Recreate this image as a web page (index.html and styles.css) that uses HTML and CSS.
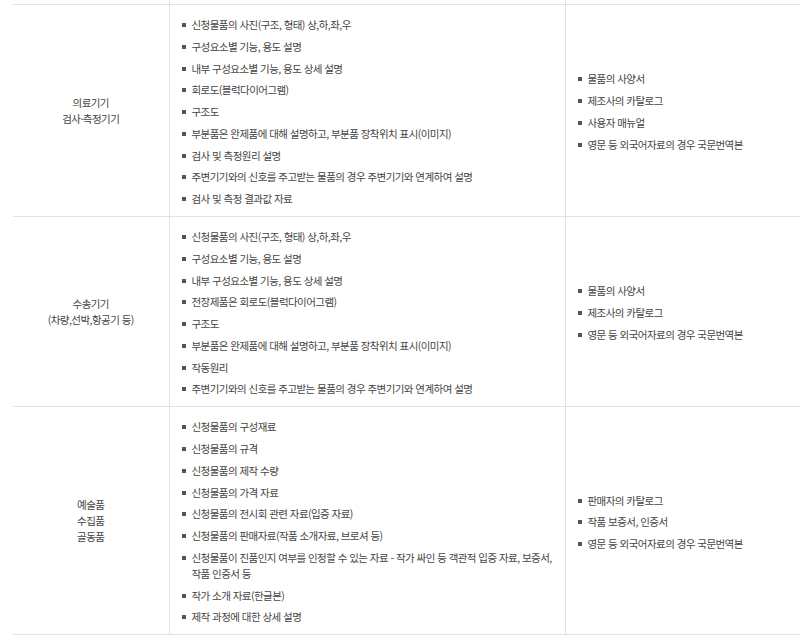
FILE: index.html
```html
<!DOCTYPE html>
<html lang="ko">
<head>
<meta charset="utf-8">
<link rel="stylesheet" href="styles.css">
</head>
<body>
<div class="wrap">
<table class="tbl">
  <colgroup>
    <col class="c1"><col class="c2"><col class="c3">
  </colgroup>
  <tbody>
    <tr class="tail"><td></td><td></td><td></td></tr>
    <tr>
      <th>의료기기<br>검사·측정기기</th>
      <td>
        <ul class="list">
          <li>신청물품의 사진(구조, 형태) 상,하,좌,우</li>
          <li>구성요소별 기능, 용도 설명</li>
          <li>내부 구성요소별 기능, 용도 상세 설명</li>
          <li>회로도(블럭다이어그램)</li>
          <li>구조도</li>
          <li>부분품은 완제품에 대해 설명하고, 부분품 장착위치 표시(이미지)</li>
          <li>검사 및 측정원리 설명</li>
          <li>주변기기와의 신호를 주고받는 물품의 경우 주변기기와 연계하여 설명</li>
          <li>검사 및 측정 결과값 자료</li>
        </ul>
      </td>
      <td>
        <ul class="list">
          <li>물품의 사양서</li>
          <li>제조사의 카탈로그</li>
          <li>사용자 매뉴얼</li>
          <li>영문 등 외국어자료의 경우 국문번역본</li>
        </ul>
      </td>
    </tr>
    <tr>
      <th>수송기기<br>(차량,선박,항공기 등)</th>
      <td>
        <ul class="list">
          <li>신청물품의 사진(구조, 형태) 상,하,좌,우</li>
          <li>구성요소별 기능, 용도 설명</li>
          <li>내부 구성요소별 기능, 용도 상세 설명</li>
          <li>전장제품은 회로도(블럭다이어그램)</li>
          <li>구조도</li>
          <li>부분품은 완제품에 대해 설명하고, 부분품 장착위치 표시(이미지)</li>
          <li>작동원리</li>
          <li>주변기기와의 신호를 주고받는 물품의 경우 주변기기와 연계하여 설명</li>
        </ul>
      </td>
      <td>
        <ul class="list">
          <li>물품의 사양서</li>
          <li>제조사의 카탈로그</li>
          <li>영문 등 외국어자료의 경우 국문번역본</li>
        </ul>
      </td>
    </tr>
    <tr>
      <th>예술품<br>수집품<br>골동품</th>
      <td>
        <ul class="list">
          <li>신청물품의 구성재료</li>
          <li>신청물품의 규격</li>
          <li>신청물품의 제작 수량</li>
          <li>신청물품의 가격 자료</li>
          <li>신청물품의 전시회 관련 자료(입증 자료)</li>
          <li>신청물품의 판매자료(작품 소개자료, 브로셔 등)</li>
          <li>신청물품이 진품인지 여부를 인정할 수 있는 자료 - 작가 싸인 등 객관적 입증 자료, 보증서, 작품 인증서 등</li>
          <li>작가 소개 자료(한글본)</li>
          <li>제작 과정에 대한 상세 설명</li>
        </ul>
      </td>
      <td>
        <ul class="list">
          <li>판매자의 카탈로그</li>
          <li>작품 보증서, 인증서</li>
          <li>영문 등 외국어자료의 경우 국문번역본</li>
        </ul>
      </td>
    </tr>
  </tbody>
</table>
</div>
</body>
</html>
```
FILE: styles.css
```css
html, body {
  margin: 0;
  padding: 0;
  background: #fff;
}
body {
  font-family: "Noto Sans CJK KR", "Noto Sans", sans-serif;
  font-size: 10.5px;
  letter-spacing: -0.55px;
  color: #444;
}
.wrap {
  padding-left: 13px;
  overflow: hidden;
}
.tbl {
  width: 787px;
  border-collapse: collapse;
  table-layout: fixed;
}
.c1 { width: 156px; }
.c2 { width: 396px; }
.c3 { width: 235px; }
.tbl th,
.tbl td {
  border-bottom: 1px solid #e2e2e2;
  border-left: 1px solid #e2e2e2;
  vertical-align: middle;
  padding: 0;
}
.tbl th:first-child,
.tbl td:first-child {
  border-left: 0;
}
.tbl th {
  font-weight: normal;
  text-align: center;
  line-height: 16px;
}
.tbl td {
  padding: 12px 10px 9px 12px;
}
.tbl .tail td { padding: 0; height: 4px; }
.list {
  list-style: none;
  margin: 0;
  padding: 0;
}
.list li {
  position: relative;
  padding-left: 10px;
  line-height: 16px;
}
.list li + li {
  margin-top: 5.75px;
}
.list li::before {
  content: "";
  position: absolute;
  left: 0;
  top: 6px;
  width: 4px;
  height: 4px;
  background: #555;
}
```
